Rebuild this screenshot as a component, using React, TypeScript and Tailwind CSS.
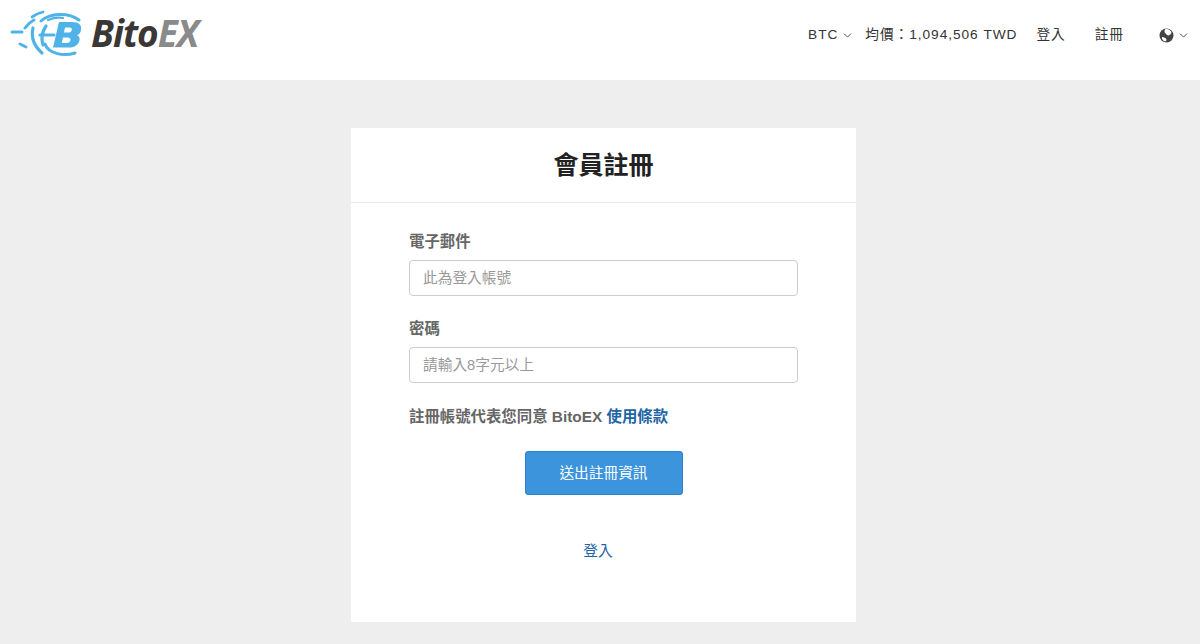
import { ChevronDown } from 'lucide-react';

const sans = 'font-["Liberation_Sans","Noto_Sans_CJK_TC",sans-serif]';

function Logo() {
  return (
    <div className="flex items-center">
      {/* mark */}
      <svg width="74" height="50" viewBox="0 0 74 50" fill="none" className="ml-[10px]">
        <g stroke="#4fb3e8" strokeLinecap="round" fill="none">
          <path d="M2 24h10" strokeWidth="3" />
          <path d="M15 20c2-3 5-6 9-8" strokeWidth="3" />
          <path d="M10 36c2 1 4 2 6 3" strokeWidth="2.800" />
          <path d="M22 9c3-2 7-4 11-5" strokeWidth="2.800" />
          <path d="M31 13c9-8 27-9 38-1" strokeWidth="3" />
          <path d="M38 12c5-2 10-3 15-2" strokeWidth="2.200" />
          <path d="M23 20c-2 9 1 18 9 25" strokeWidth="3.200" />
          <path d="M35 36c3 9 18 13 30 9" strokeWidth="3" />
          <path d="M30 27h14" strokeWidth="3.200" />
          <path d="M33 37c-2-6-1-13 3-19" strokeWidth="3.200" />
        </g>
        <path
          fillRule="evenodd"
          clipRule="evenodd"
          fill="#4fb3e8"
          d="M49 14h13c7 0 10 3 9 8-.5 3-2 4.500-4 5.200 2.200.8 3 2.600 2.500 5-1 4.500-4.500 7.300-10.500 7.300H43zm6 5.500-1 5h4c2.200 0 3.500-.9 3.800-2.600.3-1.600-.7-2.400-2.800-2.400zm-2 10-1.200 5.500h4.700c2.300 0 3.700-1 4-2.900.3-1.700-.8-2.600-3-2.600z"
        />
      </svg>
      <span className='ml-[7px] mt-[-2px] font-["Open_Sans",sans-serif] text-[37px] font-bold italic leading-none tracking-[-1px] text-[#3b3736]'>
        Bito<span className="text-[#8a8a8a]">EX</span>
      </span>
    </div>
  );
}

function Field({ label, placeholder }: { label: string; placeholder: string }) {
  return (
    <div className="flex flex-col">
      <label className="text-[15.4px] font-bold leading-[21px] text-[#666]">{label}</label>
      <input
        placeholder={placeholder}
        className="mt-[8px] h-[36px] w-full rounded-[4px] border border-[#ccc] bg-white px-[13px] text-[14.7px] text-[#555] outline-none placeholder:text-[#999]"
      />
    </div>
  );
}

export default function App() {
  return (
    <div className={`flex min-h-[644px] flex-col bg-[#eeeeee] ${sans}`}>
      <header className="flex h-[80px] items-start justify-between bg-white">
        <div className="pt-[8px]">
          <Logo />
        </div>
        <nav className="flex items-center pt-[25px] text-[13.7px] leading-[20px] tracking-[0.95px] text-[#333]">
          <span>BTC</span>
          <ChevronDown className="ml-[3px] h-[13px] w-[13px]" strokeWidth={1.5} />
          <span className="ml-[11px]">均價：1,094,506 TWD</span>
          <span className="ml-[19px]">登入</span>
          <span className="ml-[29px]">註冊</span>
          <svg width="15" height="15" viewBox="0 0 15 15" className="ml-[35px]">
            <circle cx="7.5" cy="7.5" r="7" fill="#444" />
            <path d="M6 1.500c2-1 5 0 6.500 2.500 0 2-1.500 3-3 3.500-1.500-.2-2-1.200-3-2-1-.8-1.500-2.500-.5-4zM3 9c2 0 4 1 4.500 2.500.2 1-.5 1.800-1.500 2C4 13 2.500 11 3 9z" fill="#fff" />
          </svg>
          <ChevronDown className="ml-[3px] mr-[10px] h-[13px] w-[13px]" strokeWidth={1.5} />
        </nav>
      </header>

      <main className="flex justify-center pl-[7px] pt-[48px]">
        <div className="h-[494px] w-[505px] bg-white">
          <h1 className="flex h-[75px] items-center justify-center border-b border-[#e8e8e8] pt-[2px] text-[25px] font-bold text-[#222]">
            會員註冊
          </h1>
          <form className="flex flex-col px-[58px] pt-[28px]">
            <div className="flex flex-col gap-[22px]">
              <Field label="電子郵件" placeholder="此為登入帳號" />
              <Field label="密碼" placeholder="請輸入8字元以上" />
            </div>
            <p className="mt-[23px] text-[15.4px] font-bold leading-[21px] text-[#666]">
              註冊帳號代表您同意 BitoEX <a className="text-[#1f65a6]">使用條款</a>
            </p>
            <button
              type="button"
              className="mx-auto mt-[24px] h-[44px] w-[158px] rounded-[3px] border border-[#2a82cc] bg-[#3b94dc] text-[14.7px] text-white"
            >
              送出註冊資訊
            </button>
            <a className="mt-[46px] pr-[11px] text-center text-[14.7px] leading-[21px] text-[#1f65a6]">登入</a>
          </form>
        </div>
      </main>
    </div>
  );
}
